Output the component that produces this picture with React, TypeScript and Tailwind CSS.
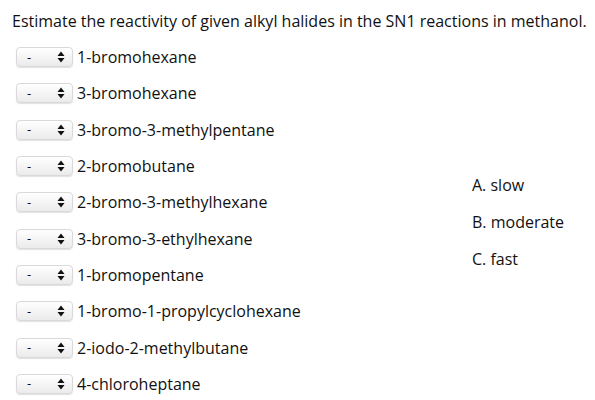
import React from "react";

const items = [
  "1-bromohexane",
  "3-bromohexane",
  "3-bromo-3-methylpentane",
  "2-bromobutane",
  "2-bromo-3-methylhexane",
  "3-bromo-3-ethylhexane",
  "1-bromopentane",
  "1-bromo-1-propylcyclohexane",
  "2-iodo-2-methylbutane",
  "4-chloroheptane",
];

function Sel() {
  return (
    <div className="relative w-[57px] h-[20px] rounded-[4px] border border-[#d9d9d9] bg-gradient-to-b from-[#ffffff] to-[#ebebeb] shadow-[0_1px_1px_rgba(0,0,0,0.12)] flex items-center shrink-0">
      <span className="ml-[10px] text-[13px] leading-none text-[#111]">-</span>
      <svg className="absolute left-[40px] top-[3px]" width="8" height="12" viewBox="0 0 8 12">
        <path d="M4 0.5 L7.5 5 L0.5 5 Z" fill="#111" />
        <path d="M4 11.5 L7.5 7 L0.5 7 Z" fill="#111" />
      </svg>
    </div>
  );
}

export default function App() {
  return (
    <div className="w-[595px] h-[400px] bg-white text-[#111] font-['Open_Sans',sans-serif]">
      <div className="pl-[12px] pt-[10px] text-[16px] leading-[22px] whitespace-nowrap">
        Estimate the reactivity of given alkyl halides in the SN1 reactions in methanol.
      </div>
      <div className="flex mt-[7px]">
        <div className="flex flex-col pl-[16px] flex-1">
          {items.map((t) => (
            <div key={t} className="h-[36.3px] flex items-center gap-[4px]">
              <Sel />
              <span className="text-[16px] leading-none">{t}</span>
            </div>
          ))}
        </div>
        <div className="flex flex-col justify-center pt-[3px] pl-[1px] w-[124px] gap-[15px] text-[16px] leading-[22px]">
          <div className="whitespace-nowrap">A. slow</div>
          <div className="whitespace-nowrap">B. moderate</div>
          <div className="whitespace-nowrap">C. fast</div>
        </div>
      </div>
    </div>
  );
}
